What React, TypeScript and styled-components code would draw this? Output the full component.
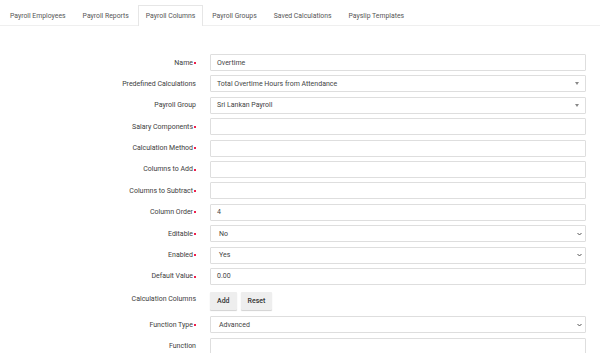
import React from 'react';
import styled, { createGlobalStyle } from 'styled-components';

const GlobalStyle = createGlobalStyle`
  html, body {
    margin: 0;
    padding: 0;
    background: #ffffff;
    font-family: Roboto, "Liberation Sans", sans-serif;
  }
`;

const Page = styled.div`
  width: 600px;
  height: 353px;
  overflow: hidden;
  background: #ffffff;
`;

const TabBar = styled.div`
  display: flex;
  align-items: flex-end;
  height: 25px;
  padding-left: 2px;
  gap: 1px;
  border-bottom: 1px solid #efefef;
`;

const Tab = styled.div<{ active?: boolean }>`
  display: flex;
  align-items: center;
  padding: 0 7px;
  font-size: 6.85px;
  color: #555555;
  background: #ffffff;
  border: 1px solid ${({ active }) => (active ? '#e6e6e6' : 'transparent')};
  border-bottom: none;
  margin-bottom: ${({ active }) => (active ? '-1px' : '0')};
  height: ${({ active }) => (active ? '20px' : '19px')};
`;

const Form = styled.div`
  display: flex;
  flex-direction: column;
  gap: 4.4px;
  padding: 28px 14px 0 0;
`;

const Row = styled.div<{ tall?: boolean }>`
  display: grid;
  grid-template-columns: 196px 1fr;
  column-gap: 14px;
  align-items: center;
  min-height: ${({ tall }) => (tall ? '22.5px' : '17px')};
`;

const Label = styled.div<{ raised?: boolean }>`
  text-align: right;
  font-size: 7px;
  color: #3d3d3d;
  ${({ raised }) => (raised ? 'margin-top: -4px;' : '')}
`;

const Star = styled.span`
  display: inline-block;
  width: 2px;
  height: 2px;
  margin-left: 1px;
  vertical-align: middle;
  background: #f0204c;
`;

const Field = styled.div<{ inset?: number }>`
  box-sizing: border-box;
  height: 17px;
  display: flex;
  align-items: center;
  justify-content: space-between;
  padding: 0 ${({ inset }) => (inset === 8 ? '3px' : '6px')} 0 ${({ inset }) => inset ?? 6}px;
  border: 1px solid #dedede;
  border-radius: 1px;
  background: #ffffff;
  font-size: 7px;
  color: #444444;
`;

const Buttons = styled.div`
  display: flex;
  gap: 4px;
`;

const Button = styled.button`
  height: 18px;
  padding: 0 7px;
  border: none;
  border-radius: 1px;
  background: #eeeeee;
  box-shadow: 0 1px 1px rgba(0, 0, 0, 0.18);
  font-family: Roboto, "Liberation Sans", sans-serif;
  font-size: 7px;
  font-weight: 500;
  color: #333333;
`;

const Triangle = () => (
  <svg width="4" height="3" viewBox="0 0 4 3">
    <path d="M0 0 L4 0 L2 3 Z" fill="#888888" />
  </svg>
);

const Chevron = () => (
  <svg width="5" height="4" viewBox="0 0 5 4">
    <path d="M0.5 1 L2.5 3 L4.5 1" stroke="#555555" strokeWidth="1" fill="none" />
  </svg>
);

type Kind = 'text' | 'select2' | 'native';

interface RowDef {
  label: string;
  required?: boolean;
  value?: string;
  kind?: Kind;
}

const topRows: RowDef[] = [
  { label: 'Name', required: true, value: 'Overtime' },
  { label: 'Predefined Calculations', value: 'Total Overtime Hours from Attendance', kind: 'select2' },
  { label: 'Payroll Group', value: 'Sri Lankan Payroll', kind: 'select2' },
  { label: 'Salary Components', required: true },
  { label: 'Calculation Method', required: true },
  { label: 'Columns to Add', required: true },
  { label: 'Columns to Subtract', required: true },
  { label: 'Column Order', required: true, value: '4' },
  { label: 'Editable', required: true, value: 'No', kind: 'native' },
  { label: 'Enabled', required: true, value: 'Yes', kind: 'native' },
  { label: 'Default Value', required: true, value: '0.00' },
];

const bottomRows: RowDef[] = [
  { label: 'Function Type', required: true, value: 'Advanced', kind: 'native' },
  { label: 'Function' },
];

const FormRow: React.FC<RowDef> = ({ label, required, value, kind = 'text' }) => (
  <Row>
    <Label>
      {label}
      {required && <Star />}
    </Label>
    <Field inset={kind === 'native' ? 8 : 6}>
      <span>{value}</span>
      {kind === 'select2' && <Triangle />}
      {kind === 'native' && <Chevron />}
    </Field>
  </Row>
);

const tabs = [
  'Payroll Employees',
  'Payroll Reports',
  'Payroll Columns',
  'Payroll Groups',
  'Saved Calculations',
  'Payslip Templates',
];

const App: React.FC = () => (
  <Page>
    <GlobalStyle />
    <TabBar>
      {tabs.map((t) => (
        <Tab key={t} active={t === 'Payroll Columns'}>
          {t}
        </Tab>
      ))}
    </TabBar>
    <Form>
      {topRows.map((r) => (
        <FormRow key={r.label} {...r} />
      ))}
      <Row tall>
        <Label raised>Calculation Columns</Label>
        <Buttons>
          <Button>Add</Button>
          <Button>Reset</Button>
        </Buttons>
      </Row>
      {bottomRows.map((r) => (
        <FormRow key={r.label} {...r} />
      ))}
    </Form>
  </Page>
);

export default App;
